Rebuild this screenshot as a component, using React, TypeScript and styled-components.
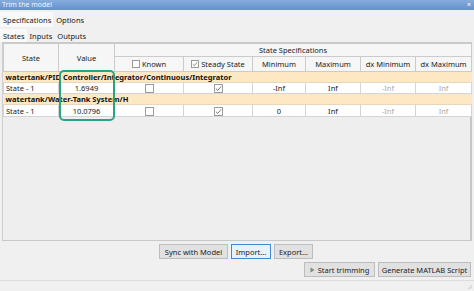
import React from "react";
import styled, { createGlobalStyle } from "styled-components";

const Global = createGlobalStyle`
  html, body { margin: 0; padding: 0; background: #f0f0f0; }
  body { font-family: "Noto Sans", "Open Sans", sans-serif; }
  * { box-sizing: border-box; }
`;

const Window = styled.div`
  width: 474px;
  height: 291px;
  display: flex;
  flex-direction: column;
  background: #f0f0f0;
  font-family: "Noto Sans", sans-serif;
  font-size: 7.5px;
  color: #151515;
  overflow: hidden;
  position: relative;
`;

const TitleBar = styled.div`
  height: 10px;
  flex: none;
  background: linear-gradient(#86acdd, #6590cb);
  color: #f2f6ff;
  display: flex;
  align-items: center;
  justify-content: space-between;
  padding: 0 3px 0 2px;
  font-size: 7px;
  line-height: 10px;
`;

const Close = styled.span`
  font-size: 7px;
  color: #e8f0ff;
  font-weight: bold;
`;

const TabBar = styled.div<{ $h: number }>`
  height: ${(p) => p.$h}px;
  flex: none;
  display: flex;
  align-items: stretch;
  padding-top: 2px;
`;

const Tab = styled.div<{ $active?: boolean }>`
  display: flex;
  align-items: center;
  padding: 0 2px 0 3px;
  background: ${(p) => (p.$active ? "#f9f9f9" : "transparent")};
  color: #151515;
`;

const TablePanel = styled.div`
  flex: none;
  height: 199px;
  margin: 0 2px 0 2px;
  background: #eeeeee;
  border-left: 1px solid #cfcfcf;
  border-bottom: 1px solid #c8c8c8;
  border-right: 2px solid #c6c6c6;
  border-top: 1px solid #c8c8c8;
`;

const Table = styled.table`
  border-collapse: collapse;
  table-layout: fixed;
  width: 468px;
  font-size: 7.5px;
`;

const Th = styled.th<{ $h?: number }>`
  height: ${(p) => p.$h ?? 13}px;
  padding: 0;
  font-weight: normal;
  background: #f6f6f6;
  border: 1px solid #cbcbcb;
  color: #222;
  text-align: center;
  vertical-align: middle;
  white-space: nowrap;
  line-height: 10px;
`;

const GroupCell = styled.td`
  height: 11px;
  padding: 0 0 0 2px;
  background: #fde8c4;
  font-weight: bold;
  color: #111;
  border-bottom: 1px solid #e8d7b8;
  white-space: nowrap;
  line-height: 10px;
`;

const Td = styled.td<{ $align?: string; $dim?: boolean }>`
  height: 11px;
  padding: 0 2px;
  background: #ffffff;
  border: 1px solid #d4d4d4;
  text-align: ${(p) => p.$align ?? "center"};
  color: ${(p) => (p.$dim ? "#a8a8a8" : "#202020")};
  white-space: nowrap;
  line-height: 10px;
`;

const Box = styled.span<{ $size: number }>`
  display: inline-flex;
  align-items: center;
  justify-content: center;
  width: ${(p) => p.$size}px;
  height: ${(p) => p.$size}px;
  border: 1px solid #9c9c9c;
  background: #fff;
  vertical-align: middle;
`;

const HeadLabel = styled.span`
  display: inline-flex;
  align-items: center;
  gap: 2px;
`;

const Check = ({ checked, size = 9 }: { checked?: boolean; size?: number }) => (
  <Box $size={size}>
    {checked && (
      <svg width={size - 2} height={size - 2} viewBox="0 0 8 8">
        <path d="M1 4.2 L3.1 6.2 L7 1.6" fill="none" stroke="#555" strokeWidth="0.9" />
      </svg>
    )}
  </Box>
);

const Highlight = styled.div`
  position: absolute;
  left: 59px;
  top: 70px;
  width: 56px;
  height: 51px;
  border: 2px solid #2aa384;
  border-radius: 5px;
  pointer-events: none;
`;

const ButtonRow = styled.div<{ $h: number; $pl: number; $pt: number }>`
  height: ${(p) => p.$h}px;
  flex: none;
  display: flex;
  gap: 3px;
  padding-left: ${(p) => p.$pl}px;
  padding-top: ${(p) => p.$pt}px;
`;

const Button = styled.div<{ $w: number; $focused?: boolean }>`
  width: ${(p) => p.$w}px;
  height: 15px;
  display: flex;
  align-items: center;
  justify-content: center;
  gap: 3px;
  background: ${(p) => (p.$focused ? "#e5f1fb" : "#e1e1e1")};
  border: 1px solid ${(p) => (p.$focused ? "#3f8ad3" : "#bdbdbd")};
  color: #222;
  white-space: nowrap;
`;

const StatusBar = styled.div`
  flex: 1;
  border-top: 1px solid #dcdcdc;
  background: #f0f0f0;
  display: flex;
  justify-content: flex-end;
  align-items: flex-end;
  padding: 0 1px 1px 0;
`;

const cols = [55, 56, 69, 69, 53, 55, 55, 56];

const groups = [
  {
    name: "watertank/PID Controller/Integrator/Continuous/Integrator",
    value: "1.6949",
    min: "-Inf",
  },
  { name: "watertank/Water-Tank System/H", value: "10.0796", min: "0" },
];

export default function App() {
  return (
    <Window>
      <Global />
      <TitleBar>
        <span>Trim the model</span>
        <Close>×</Close>
      </TitleBar>
      <TabBar $h={17}>
        <Tab $active>Specifications</Tab>
        <Tab>Options</Tab>
      </TabBar>
      <TabBar $h={15}>
        <Tab $active>States</Tab>
        <Tab>Inputs</Tab>
        <Tab>Outputs</Tab>
      </TabBar>
      <TablePanel>
        <Table>
          <colgroup>
            {cols.map((w, i) => (
              <col key={i} style={{ width: w }} />
            ))}
          </colgroup>
          <thead>
            <tr>
              <Th rowSpan={2}>State</Th>
              <Th rowSpan={2}>Value</Th>
              <Th colSpan={6}>State Specifications</Th>
            </tr>
            <tr>
              <Th $h={15}>
                <HeadLabel>
                  <Check size={8} />
                  Known
                </HeadLabel>
              </Th>
              <Th $h={15}>
                <HeadLabel>
                  <Check size={8} checked />
                  Steady State
                </HeadLabel>
              </Th>
              <Th $h={15}>Minimum</Th>
              <Th $h={15}>Maximum</Th>
              <Th $h={15}>dx Minimum</Th>
              <Th $h={15}>dx Maximum</Th>
            </tr>
          </thead>
          <tbody>
            {groups.map((g) => (
              <React.Fragment key={g.name}>
                <tr>
                  <GroupCell colSpan={8}>{g.name}</GroupCell>
                </tr>
                <tr>
                  <Td $align="left">State - 1</Td>
                  <Td>{g.value}</Td>
                  <Td>
                    <Check />
                  </Td>
                  <Td>
                    <Check checked />
                  </Td>
                  <Td>{g.min}</Td>
                  <Td>Inf</Td>
                  <Td $dim>-Inf</Td>
                  <Td $dim>Inf</Td>
                </tr>
              </React.Fragment>
            ))}
          </tbody>
        </Table>
      </TablePanel>
      <Highlight />
      <ButtonRow $h={21} $pl={159} $pt={3}>
        <Button $w={69}>Sync with Model</Button>
        <Button $w={40} $focused>
          Import...
        </Button>
        <Button $w={39}>Export...</Button>
      </ButtonRow>
      <ButtonRow $h={18} $pl={304} $pt={0}>
        <Button $w={71}>
          <svg width="5" height="6" viewBox="0 0 5 6">
            <path d="M0.5 0.5 L4.5 3 L0.5 5.5 Z" fill="#7a8a7a" />
          </svg>
          Start trimming
        </Button>
        <Button $w={93}>Generate MATLAB Script</Button>
      </ButtonRow>
      <StatusBar>
        <svg width="6" height="6" viewBox="0 0 6 6">
          <path d="M5 1 L1 5 M5 3 L3 5" stroke="#c4c4c4" strokeWidth="0.8" />
        </svg>
      </StatusBar>
    </Window>
  );
}
